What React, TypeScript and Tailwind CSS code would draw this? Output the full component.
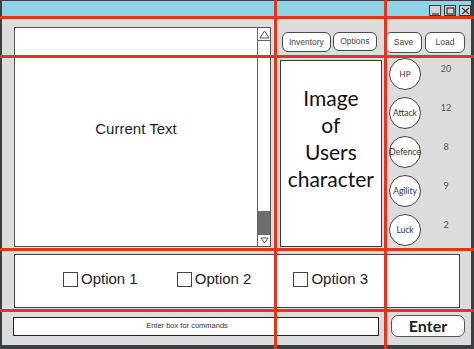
const sans = "font-['Liberation_Sans',Arial,sans-serif]";
const cal = "font-['Lato','Open_Sans',sans-serif]";

const stats = [
  { label: "HP", value: "20", size: "text-[8px]" },
  { label: "Attack", value: "12", size: "text-[8.5px]" },
  { label: "Defence", value: "8", size: "text-[8.5px]" },
  { label: "Agility", value: "9", size: "text-[8.5px]" },
  { label: "Luck", value: "2", size: "text-[8.5px]" },
];

function WinButton({ kind }: { kind: "min" | "max" | "close" }) {
  return (
    <div className="flex h-[11px] w-[12px] items-center justify-center border border-[#3c3c3c] bg-[#cfd3d6]">
      <svg width="9" height="8" viewBox="0 0 9 8" fill="none" stroke="#333" strokeWidth="1.2">
        {kind === "min" && <path d="M1 7h7" />}
        {kind === "max" && <rect x="1" y="1" width="7" height="6" />}
        {kind === "close" && <path d="M1 1l7 6M8 1L1 7" />}
      </svg>
    </div>
  );
}

function Pill({ label, w, h }: { label: string; w: string; h: string }) {
  return (
    <div
      className={`${w} ${h} ${sans} flex items-center justify-center rounded-[6px] border border-[#4a4a4a] bg-white text-[8.5px] text-[#444]`}
    >
      {label}
    </div>
  );
}

function Check({ label }: { label: string }) {
  return (
    <div className={`${sans} flex items-center gap-[3px] text-[15px] text-[#222]`}>
      <span className="h-[15px] w-[15px] border border-[#444] bg-white" />
      {label}
    </div>
  );
}

export default function App() {
  return (
    <div className="relative h-[349px] w-[474px] overflow-hidden bg-[#3b4045] pb-[4px] pl-[2px] pr-[3px] pt-px">
      <div className="flex h-full flex-col bg-[#dcdcdc]">
        {/* title bar */}
        <div className="flex h-[16px] items-start justify-end gap-[3px] bg-[#8fd4e6] pt-[4px]">
          <WinButton kind="min" />
          <WinButton kind="max" />
          <WinButton kind="close" />
        </div>

        {/* main section */}
        <div className="flex h-[233px]">
          {/* text column */}
          <div className="w-[274px] pl-[12px] pt-[10px]">
            <div className="flex h-[220px] w-[257px] border border-[#555] bg-white">
              <div className={`${sans} flex flex-1 items-center justify-center pb-[16px] text-[15px] text-[#1e1e1e]`}>
                Current Text
              </div>
              <div className="flex w-[13px] flex-col border-l border-[#666]">
                <div className="flex h-[13px] items-center justify-center border-b border-[#666]">
                  <svg width="11" height="9" viewBox="0 0 11 9" fill="none" stroke="#555" strokeWidth="1">
                    <path d="M5.5 1L10 8H1z" />
                  </svg>
                </div>
                <div className="flex-1" />
                <div className="h-[23px] bg-[#6d6d6d]" />
                <div className="flex h-[12px] items-center justify-center border-t border-[#666]">
                  <svg width="9" height="7" viewBox="0 0 9 7" fill="none" stroke="#555" strokeWidth="1">
                    <path d="M1 1h7L4.5 6z" />
                  </svg>
                </div>
              </div>
            </div>
          </div>

          {/* middle column */}
          <div className="w-[110px] pl-[6px] pt-[15px]">
            <div className="flex items-start gap-[2px] pl-[2px]">
              <Pill label="Inventory" w="w-[49px]" h="h-[20px]" />
              <Pill label="Options" w="w-[44px]" h="h-[19px]" />
            </div>
            <div className={`${cal} mt-[8px] flex h-[187px] w-[102px] flex-col items-center border-[1.5px] border-[#3a3a3a] bg-white pt-[23px] text-[21px] leading-[27px] text-[#111]`}>
              <span>Image</span>
              <span>of</span>
              <span>Users</span>
              <span>character</span>
            </div>
          </div>

          {/* right column */}
          <div className="flex-1 pt-[15px]">
            <div className="flex gap-[3px] pl-[2px]">
              <Pill label="Save" w="w-[37px]" h="h-[21px]" />
              <Pill label="Load" w="w-[40px]" h="h-[21px]" />
            </div>
            <div className="mt-[5px] flex flex-col gap-[7px] pl-[6px]">
              {stats.map((s) => (
                <div key={s.label} className="flex items-start">
                  <div
                    className={`${cal} ${s.size} flex h-[32px] w-[32px] items-center justify-center rounded-full border border-[#444] bg-white text-[#333]`}
                  >
                    {s.label}
                  </div>
                  <div className={`${cal} mt-[4px] w-[50px] text-center text-[9px] text-[#555]`}>
                    {s.value}
                  </div>
                </div>
              ))}
            </div>
          </div>
        </div>

        {/* options panel */}
        <div className="ml-[12px] mt-[4px] flex h-[54px] w-[446px] items-center border border-[#444] bg-white pb-[3px] pl-[48px]">
          <Check label="Option 1" />
          <div className="w-[39px]" />
          <Check label="Option 2" />
          <div className="w-[42px]" />
          <Check label="Option 3" />
        </div>

        {/* command row */}
        <div className="mt-[7px] flex h-[22px] items-center">
          <div
            className={`${sans} ml-[11px] flex h-[19px] w-[366px] items-center justify-center border-[1.5px] border-[#222] bg-white pr-[18px] text-[7.5px] text-[#333]`}
          >
            Enter box for commands
          </div>
          <div
            className={`${cal} ml-[12px] flex h-[22px] w-[74px] items-center justify-center rounded-[7px] border border-[#555] bg-white text-[16px] font-bold text-[#222]`}
          >
            Enter
          </div>
        </div>
      </div>

      {/* red guide lines overlay */}
      <div className="pointer-events-none absolute left-0 top-[16px] h-[3px] w-full bg-[#e4341e]" />
      <div className="pointer-events-none absolute left-0 top-[55px] h-[3px] w-full bg-[#e4341e]" />
      <div className="pointer-events-none absolute left-0 top-[248px] h-[3px] w-full bg-[#e4341e]" />
      <div className="pointer-events-none absolute left-0 top-[309px] h-[3px] w-full bg-[#e4341e]" />
      <div className="pointer-events-none absolute left-[274px] top-0 h-full w-[3px] bg-[#e4341e]" />
      <div className="pointer-events-none absolute left-[384px] top-0 h-full w-[3px] bg-[#e4341e]" />
    </div>
  );
}
